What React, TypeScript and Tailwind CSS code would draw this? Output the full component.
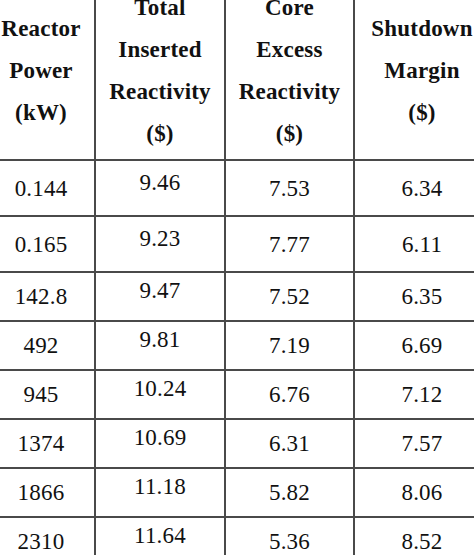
import React from "react";

const rows: [string, string, string, string][] = [
  ["0.144", "9.46", "7.53", "6.34"],
  ["0.165", "9.23", "7.77", "6.11"],
  ["142.8", "9.47", "7.52", "6.35"],
  ["492", "9.81", "7.19", "6.69"],
  ["945", "10.24", "6.76", "7.12"],
  ["1374", "10.69", "6.31", "7.57"],
  ["1866", "11.18", "5.82", "8.06"],
  ["2310", "11.64", "5.36", "8.52"],
];

const headers: string[][] = [
  ["Reactor", "Power", "(kW)"],
  ["Total", "Inserted", "Reactivity", "($)"],
  ["Core", "Excess", "Reactivity", "($)"],
  ["Shutdown", "Margin", "($)"],
];

const cellBase = "flex items-center justify-center border-[#4a4a4a]";

export default function App() {
  return (
    <div
      className="w-[474px] h-[555px] overflow-hidden bg-white text-[#111111]"
      style={{ fontFamily: '"Liberation Serif", "Times New Roman", serif' }}
    >
      <div className="grid grid-cols-[96px_130px_129px_1fr] text-[23px] tracking-[0.2px]">
        {headers.map((lines, i) => (
          <div
            key={"h" + i}
            className={
              cellBase +
              " h-[161px] pb-[18px] border-b-2 font-bold flex-col leading-[42px] text-center" +
              (i < 3 ? " border-r-2" : "") +
              (i === 0 ? " pr-[12px]" : "") +
              (i === 3 ? " pl-[15px]" : "")
            }
          >
            {lines.map((l, j) => (
              <span key={j} className="block whitespace-nowrap">
                {l}
              </span>
            ))}
          </div>
        ))}
        {rows.map((r, ri) => {
          const h = ri < 2 ? "h-[56px]" : "h-[49px]";
          return r.map((v, ci) => (
            <div
              key={ri + "-" + ci}
              className={
                cellBase +
                " " +
                h +
                " border-b-2 leading-none" +
                (ci < 3 ? " border-r-2" : "") +
                (ci === 0 ? " pr-[12px]" : "") +
                (ci === 1 ? " pb-[12px]" : "") +
                (ci === 3 ? " pl-[15px]" : "")
              }
            >
              {v}
            </div>
          ));
        })}
      </div>
    </div>
  );
}
